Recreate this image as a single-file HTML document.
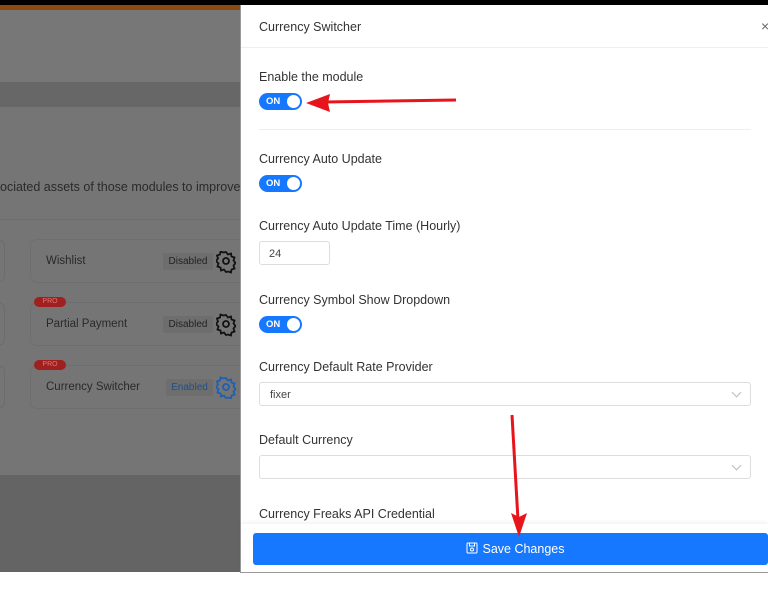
<!DOCTYPE html>
<html><head><style>
*{box-sizing:border-box;margin:0;padding:0}
body{width:768px;height:594px;position:relative;overflow:hidden;background:#fff;font-family:"Liberation Sans",sans-serif}
.a{position:absolute}
.lbl{position:absolute;left:259px;font-size:12.5px;color:#333}
.tog{position:absolute;left:259px;width:43px;height:17px;border-radius:9px;background:#1677ff}
.tog span{position:absolute;left:7px;top:3px;color:#fff;font-size:9.5px;font-weight:bold}
.tog i{position:absolute;right:2px;top:2px;width:13px;height:13px;border-radius:50%;background:#fff}
.card{position:absolute;left:30px;width:240px;height:44px;border:1px solid #6e6e6e;border-radius:7px}
.card .t{position:absolute;left:15px;top:15px;font-size:11.5px;color:#2a2a2a}
.badge{position:absolute;left:132px;top:13px;width:50px;height:17px;background:#6e6e6e;font-size:10px;color:#222;text-align:center;line-height:17px;border-radius:2px}
.pro{position:absolute;left:34px;width:32px;height:10px;background:#a02020;border-radius:5px;color:#d77;font-size:7px;text-align:center;line-height:10px}
.sel{position:absolute;left:259px;width:492px;height:24px;border:1px solid #ddd;border-radius:3px;font-size:11px;color:#444;padding:6px 10px}
.sel:after{content:"";position:absolute;right:10px;top:6px;width:6px;height:6px;border-right:1px solid #bbb;border-bottom:1px solid #bbb;transform:rotate(45deg)}
</style></head><body>
<div class="a" style="left:0;top:0;width:768px;height:5px;background:#000"></div>
<div class="a" style="left:0;top:5px;width:241px;height:5px;background:#8a4a10"></div>
<div class="a" style="left:0;top:10px;width:241px;height:72px;background:#777"></div>
<div class="a" style="left:0;top:82px;width:241px;height:25px;background:#676767"></div>
<div class="a" style="left:0;top:107px;width:241px;height:368px;background:#757575"></div>
<div class="a" style="left:0;top:475px;width:241px;height:97px;background:#646464"></div>
<div class="a" style="left:0;top:180px;font-size:12.5px;color:#2a2a2a;white-space:nowrap">ociated assets of those modules to improve</div>
<div class="a" style="left:0;top:219px;width:241px;height:1px;background:#6c6c6c"></div>
<div class="a" style="left:-10px;top:239px;width:15px;height:44px;border:1px solid #6c6c6c;border-radius:7px"></div>
<div class="a" style="left:-10px;top:302px;width:15px;height:44px;border:1px solid #6c6c6c;border-radius:7px"></div>
<div class="a" style="left:-10px;top:365px;width:15px;height:44px;border:1px solid #6c6c6c;border-radius:7px"></div>
<div class="card" style="top:239px"><div class="t">Wishlist</div><div class="badge">Disabled</div></div>
<div class="card" style="top:302px"><div class="t">Partial Payment</div><div class="badge">Disabled</div></div>
<div class="card" style="top:365px"><div class="t">Currency Switcher</div><div class="badge" style="color:#1d4f8a;left:135px;width:47px">Enabled</div></div>
<div class="pro" style="top:297px">PRO</div>
<div class="pro" style="top:360px">PRO</div>
<svg class="a" style="left:216px;top:251px" width="20" height="148" viewBox="0 0 20 148" fill="none" stroke-width="1.8">
<g stroke="#111"><circle cx="10" cy="10" r="3"/><path d="M10 2l2 2.5 3-1 .5 3 3 1-1 3 2 2.5-2 2.5 1 3-3 1-.5 3-3-1L10 22l-2-2.5-3 1-.5-3-3-1 1-3L0 11l2-2.5-1-3 3-1 .5-3 3 1z" transform="translate(0 -1)"/></g>
<g stroke="#111" transform="translate(0 63)"><circle cx="10" cy="10" r="3"/><path d="M10 2l2 2.5 3-1 .5 3 3 1-1 3 2 2.5-2 2.5 1 3-3 1-.5 3-3-1L10 22l-2-2.5-3 1-.5-3-3-1 1-3L0 11l2-2.5-1-3 3-1 .5-3 3 1z" transform="translate(0 -1)"/></g>
<g stroke="#1d5fb0" transform="translate(0 126)"><circle cx="10" cy="10" r="3"/><path d="M10 2l2 2.5 3-1 .5 3 3 1-1 3 2 2.5-2 2.5 1 3-3 1-.5 3-3-1L10 22l-2-2.5-3 1-.5-3-3-1 1-3L0 11l2-2.5-1-3 3-1 .5-3 3 1z" transform="translate(0 -1)"/></g>
</svg>
<div class="a" style="left:240px;top:5px;width:528px;height:567px;background:#fff;border-left:1px solid #999"></div>
<div class="a" style="left:240px;top:572px;width:528px;height:1px;background:#999"></div>
<div class="a" style="left:259px;top:20px;font-size:12.5px;color:#333">Currency Switcher</div>
<div class="a" style="left:761px;top:18px;font-size:14px;color:#666">×</div>
<div class="a" style="left:241px;top:47px;width:527px;height:1px;background:#eee"></div>
<div class="lbl" style="top:70px">Enable the module</div>
<div class="tog" style="top:93px"><span>ON</span><i></i></div>
<div class="a" style="left:259px;top:129px;width:492px;height:1px;background:#eee"></div>
<div class="lbl" style="top:152px">Currency Auto Update</div>
<div class="tog" style="top:175px"><span>ON</span><i></i></div>
<div class="lbl" style="top:219px">Currency Auto Update Time (Hourly)</div>
<div class="a" style="left:259px;top:241px;width:71px;height:24px;border:1px solid #ddd;border-radius:3px;font-size:11px;color:#444;padding:6px 9px">24</div>
<div class="lbl" style="top:293px">Currency Symbol Show Dropdown</div>
<div class="tog" style="top:316px"><span>ON</span><i></i></div>
<div class="lbl" style="top:360px">Currency Default Rate Provider</div>
<div class="sel" style="top:382px">fixer</div>
<div class="lbl" style="top:433px">Default Currency</div>
<div class="sel" style="top:455px"></div>
<div class="lbl" style="top:507px">Currency Freaks API Credential</div>
<div class="a" style="left:241px;top:524px;width:527px;height:48px;background:#fff;box-shadow:0 -2px 4px rgba(0,0,0,.05)"></div>
<div class="a" style="left:253px;top:533px;width:515px;height:32px;background:#1677ff;border-radius:3px;color:#fff;font-size:12.5px;text-align:center;line-height:32px;padding-left:10px">
<svg width="12" height="12" viewBox="0 0 12 12" style="vertical-align:-1px;margin-right:4px" fill="none" stroke="#fff" stroke-width="1"><rect x="1" y="1" width="10" height="10" rx="1"/><path d="M3.5 1v3h5V1"/><circle cx="6" cy="7.5" r="1.5"/></svg>Save Changes</div>
<svg class="a" style="left:0;top:0" width="768" height="594">
<path d="M456 100L325 102" stroke="#e8141c" stroke-width="3"/>
<path d="M306 103l24-9-2 9 2 9z" fill="#e8141c"/>
<path d="M512 415L518 520" stroke="#e8141c" stroke-width="3"/>
<path d="M519 537l-8-24 8 4 8-4z" fill="#e8141c"/>
</svg>
</body></html>
